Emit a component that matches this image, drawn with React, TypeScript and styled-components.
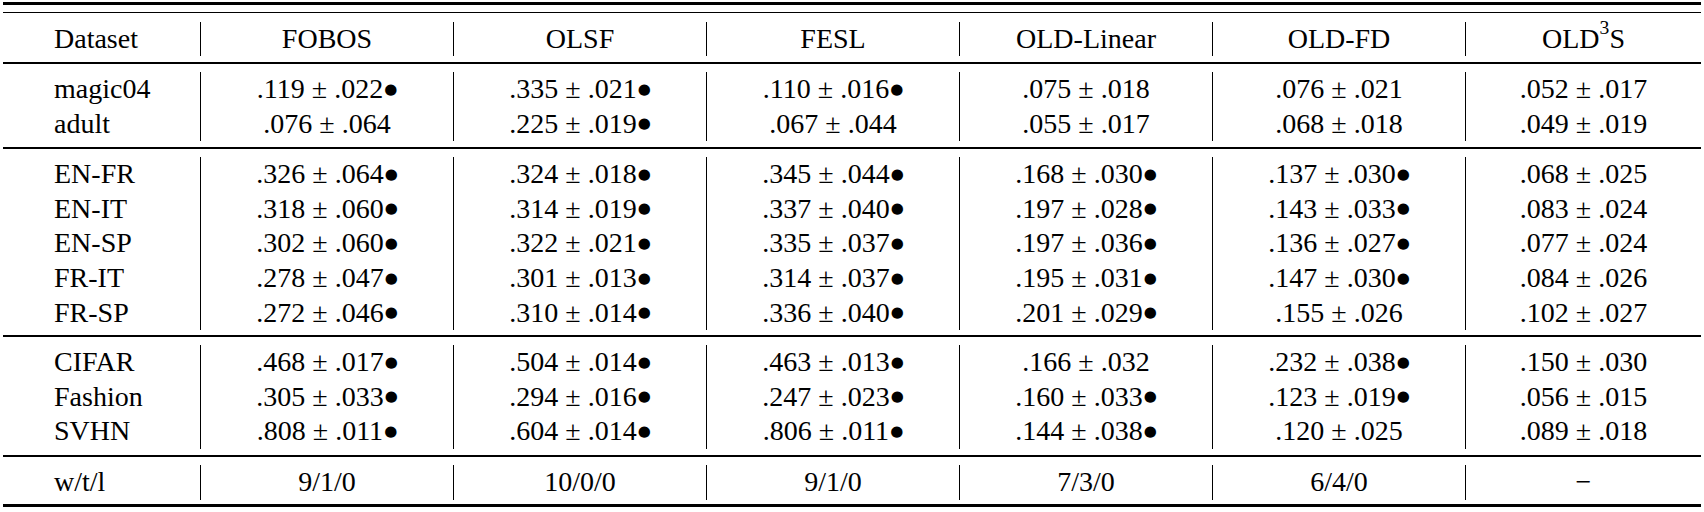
import React from "react";
import styled, { createGlobalStyle } from "styled-components";

const Global = createGlobalStyle`
  html, body { margin: 0; padding: 0; background: #ffffff; }
  body {
    font-family: "Liberation Serif", "Times New Roman", serif;
    color: #000000;
  }
`;

const Table = styled.div`
  width: 1698px;
  margin: 2px 0 0 3px;
  display: flex;
  flex-direction: column;
`;

const Rule = styled.div<{ $w: number; $gap?: number }>`
  height: ${(p) => p.$w}px;
  background: #000000;
  margin-bottom: ${(p) => p.$gap ?? 0}px;
`;

const Section = styled.div<{ $top: number; $bottom: number }>`
  padding: ${(p) => p.$top}px 0 ${(p) => p.$bottom}px;
  display: flex;
  flex-direction: column;
`;

const Row = styled.div<{ $h: number }>`
  display: grid;
  grid-template-columns: 197px repeat(5, 253px) 236px;
  height: ${(p) => p.$h}px;
`;

const Cell = styled.div<{ $first?: boolean }>`
  display: flex;
  align-items: center;
  justify-content: ${(p) => (p.$first ? "flex-start" : "center")};
  padding-left: ${(p) => (p.$first ? "51px" : "0")};
  border-left: ${(p) => (p.$first ? "none" : "1px solid #000")};
  font-size: 28px;
  line-height: 1;
  white-space: nowrap;
`;

const Sup = styled.span`
  font-size: 0.7em;
  position: relative;
  top: -0.55em;
  line-height: 0;
`;

const Dot = styled.span`
  font-family: "DejaVu Sans", sans-serif;
  font-size: 15px;
  line-height: 1;
  margin-left: 1px;
`;

type Val = [string, string, boolean];

const v = (m: string, s: string, w = false): Val => [m, s, w];

const Value = ({ val }: { val: Val }) => (
  <>
    {val[0]} ± {val[1]}
    {val[2] && <Dot>●</Dot>}
  </>
);

const headers: React.ReactNode[] = [
  "FOBOS",
  "OLSF",
  "FESL",
  "OLD-Linear",
  "OLD-FD",
  <>
    OLD<Sup>3</Sup>S
  </>,
];

type DataRow = { name: string; vals: Val[] };

const sections: DataRow[][] = [
  [
    { name: "magic04", vals: [v(".119", ".022", true), v(".335", ".021", true), v(".110", ".016", true), v(".075", ".018"), v(".076", ".021"), v(".052", ".017")] },
    { name: "adult", vals: [v(".076", ".064"), v(".225", ".019", true), v(".067", ".044"), v(".055", ".017"), v(".068", ".018"), v(".049", ".019")] },
  ],
  [
    { name: "EN-FR", vals: [v(".326", ".064", true), v(".324", ".018", true), v(".345", ".044", true), v(".168", ".030", true), v(".137", ".030", true), v(".068", ".025")] },
    { name: "EN-IT", vals: [v(".318", ".060", true), v(".314", ".019", true), v(".337", ".040", true), v(".197", ".028", true), v(".143", ".033", true), v(".083", ".024")] },
    { name: "EN-SP", vals: [v(".302", ".060", true), v(".322", ".021", true), v(".335", ".037", true), v(".197", ".036", true), v(".136", ".027", true), v(".077", ".024")] },
    { name: "FR-IT", vals: [v(".278", ".047", true), v(".301", ".013", true), v(".314", ".037", true), v(".195", ".031", true), v(".147", ".030", true), v(".084", ".026")] },
    { name: "FR-SP", vals: [v(".272", ".046", true), v(".310", ".014", true), v(".336", ".040", true), v(".201", ".029", true), v(".155", ".026"), v(".102", ".027")] },
  ],
  [
    { name: "CIFAR", vals: [v(".468", ".017", true), v(".504", ".014", true), v(".463", ".013", true), v(".166", ".032"), v(".232", ".038", true), v(".150", ".030")] },
    { name: "Fashion", vals: [v(".305", ".033", true), v(".294", ".016", true), v(".247", ".023", true), v(".160", ".033", true), v(".123", ".019", true), v(".056", ".015")] },
    { name: "SVHN", vals: [v(".808", ".011", true), v(".604", ".014", true), v(".806", ".011", true), v(".144", ".038", true), v(".120", ".025"), v(".089", ".018")] },
  ],
];

const wtl = ["9/1/0", "10/0/0", "9/1/0", "7/3/0", "6/4/0", "−"];

const sectionPads: [number, number, number][] = [
  [8, 6, 34.5],
  [8, 5, 34.6],
  [8, 6, 34.6],
];

export default function App() {
  return (
    <>
      <Global />
      <Table>
        <Rule $w={3} $gap={7} />
        <Rule $w={1} />
        <Section $top={9} $bottom={6}>
          <Row $h={34}>
            <Cell $first>Dataset</Cell>
            {headers.map((h, i) => (
              <Cell key={i}>{h}</Cell>
            ))}
          </Row>
        </Section>
        {sections.map((rows, si) => (
          <React.Fragment key={si}>
            <Rule $w={2} />
            <Section $top={sectionPads[si][0]} $bottom={sectionPads[si][1]}>
              {rows.map((r) => (
                <Row key={r.name} $h={sectionPads[si][2]}>
                  <Cell $first>{r.name}</Cell>
                  {r.vals.map((val, i) => (
                    <Cell key={i}>
                      <Value val={val} />
                    </Cell>
                  ))}
                </Row>
              ))}
            </Section>
          </React.Fragment>
        ))}
        <Rule $w={2} />
        <Section $top={8} $bottom={4}>
          <Row $h={35}>
            <Cell $first>w/t/l</Cell>
            {wtl.map((t, i) => (
              <Cell key={i}>{t}</Cell>
            ))}
          </Row>
        </Section>
        <Rule $w={3} />
      </Table>
    </>
  );
}
